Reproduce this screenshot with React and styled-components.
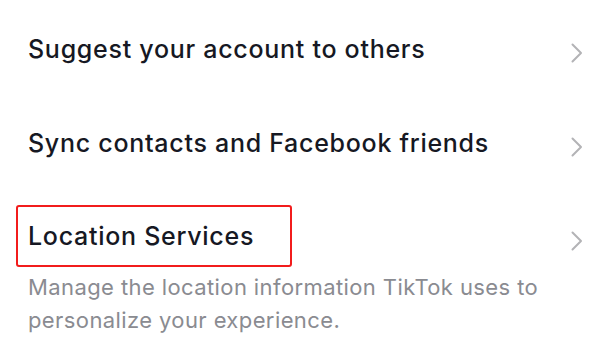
import React from 'react';
import styled, { createGlobalStyle } from 'styled-components';

const GlobalStyle = createGlobalStyle`
	html, body {
		margin: 0;
		padding: 0;
		background: #fff;
	}
	body {
		font-family: Inter, 'Liberation Sans', sans-serif;
		-webkit-font-smoothing: antialiased;
	}
`;

const List = styled.div`
	width: 610px;
	height: 356px;
	padding-top: 2px;
	box-sizing: border-box;
	overflow: hidden;
`;

const Row = styled.div`
	display: flex;
	align-items: center;
	justify-content: space-between;
	height: 94px;
	padding: 0 27px 0 28px;
`;

const Item = styled.div`
	padding: 15px 27px 0 28px;
`;

const ItemHead = styled.div`
	display: flex;
	align-items: center;
	justify-content: space-between;
	height: 62px;
`;

const Title = styled.span`
	font-size: 25px;
	font-weight: 500;
	color: #161823;
	letter-spacing: 0.72px;
`;

const Marked = styled.div`
	display: flex;
	align-items: center;
	box-sizing: border-box;
	height: 62px;
	margin-left: -12px;
	padding: 0 36px 0 10px;
	border: 2px solid #f21c1c;
	border-radius: 3px;
`;

const Chevron = styled.svg`
	flex-shrink: 0;
	width: 12px;
	height: 20px;
	margin-top: ${p => p.$drop || 0}px;
`;

const Desc = styled.p`
	margin: 4px 0 0;
	width: 540px;
	font-size: 22px;
	line-height: 33px;
	letter-spacing: 0.4px;
	color: #8a8b91;
`;

const Arrow = ({ drop }) => (
	<Chevron $drop={drop} viewBox="0 0 12 20" fill="none">
		<path d="M1.5 1.5 L10 10 L1.5 18.5" stroke="#b3b3b6" strokeWidth="2" strokeLinecap="round" strokeLinejoin="round" />
	</Chevron>
);

const App = () => (
	<>
		<GlobalStyle />
		<List>
			<Row>
				<Title>Suggest your account to others</Title>
				<Arrow drop={8} />
			</Row>
			<Row>
				<Title>Sync contacts and Facebook friends</Title>
				<Arrow drop={8} />
			</Row>
			<Item>
				<ItemHead>
					<Marked>
						<Title>Location Services</Title>
					</Marked>
					<Arrow drop={10} />
				</ItemHead>
				<Desc>Manage the location information TikTok uses to personalize your experience.</Desc>
			</Item>
		</List>
	</>
);

export default App;
